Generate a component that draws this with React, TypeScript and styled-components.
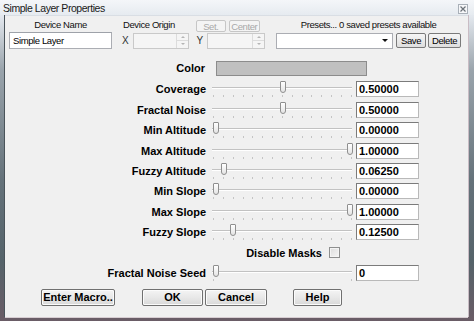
import React from 'react';
import styled, { createGlobalStyle } from 'styled-components';

const GlobalStyle = createGlobalStyle`
  html, body {
    margin: 0;
    padding: 0;
    width: 474px;
    height: 321px;
    overflow: hidden;
  }
  * { box-sizing: border-box; }
`;

const Window = styled.div`
  width: 474px;
  height: 321px;
  display: flex;
  flex-direction: column;
  background: linear-gradient(180deg, #eef2f6 0px, #e3e8ee 16px, #9aa4ac 70px, #65727a 180px, #55636a 260px, #6a5c66 321px);
  font-family: "Liberation Sans", Arial, sans-serif;
  color: #000;
`;

const TitleBar = styled.div`
  height: 15px;
  flex: none;
  display: flex;
  align-items: center;
  padding: 0 6px 0 3px;
  background: linear-gradient(180deg, #f4f6f9, #e6ebf0);
`;

const Title = styled.div`
  font-size: 10.5px;
  letter-spacing: -0.45px;
  color: #1a1a1a;
  flex: 1;
  padding-top: 1px;
`;

const CloseBox = styled.div`
  width: 10px;
  height: 10px;
  margin-top: 3px;
  border: 1px solid #a9b0b8;
  background: #f6f7f9;
  display: flex;
  align-items: center;
  justify-content: center;
`;

const Client = styled.div`
  flex: 1;
  margin: 0 6px 4px 5px;
  background: #f0f0f0;
  border-top: 1px solid #d9dee4;
  box-shadow: -1px 0 0 #4a545a, 1px 0 0 #c9bcc4, 0 1px 0 #d7cdd2;
  display: flex;
  flex-direction: column;
`;

const TopRow = styled.div`
  display: flex;
  align-items: flex-start;
  padding-top: 1px;
`;

const Group = styled.div<{ $w: number; $ml: number }>`
  width: ${p => p.$w}px;
  margin-left: ${p => p.$ml}px;
  display: flex;
  flex-direction: column;
`;

const GroupHead = styled.div<{ $center?: boolean }>`
  height: 15px;
  display: flex;
  align-items: center;
  justify-content: ${p => (p.$center ? 'center' : 'flex-start')};
`;

const SmallLabel = styled.span<{ $pl?: number }>`
  font-size: 9.5px;
  letter-spacing: -0.4px;
  color: #111;
  padding-left: ${p => p.$pl ?? 0}px;
  white-space: nowrap;
`;

const FieldRow = styled.div`
  height: 17px;
  display: flex;
  align-items: center;
`;

const TextField = styled.div`
  width: 103px;
  height: 17px;
  border: 1px solid #abadb3;
  border-top-color: #9ea2a9;
  background: #fff;
  font-size: 9.5px;
  letter-spacing: -0.4px;
  padding: 2px 0 0 3px;
`;

const MiniButton = styled.div<{ $w: number; $ml: number; $disabled?: boolean }>`
  width: ${p => p.$w}px;
  margin-left: ${p => p.$ml}px;
  height: ${p => (p.$disabled ? 12 : 15)}px;
  margin-top: ${p => (p.$disabled ? 3 : 0)}px;
  border: 1px solid ${p => (p.$disabled ? '#c6c6c6' : '#7a7a7a')};
  border-radius: 2px;
  background: ${p => (p.$disabled ? '#f4f4f4' : 'linear-gradient(180deg, #f6f6f6, #dedede)')};
  color: ${p => (p.$disabled ? '#a8a8a8' : '#000')};
  font-size: 9.5px;
  letter-spacing: -0.4px;
  display: flex;
  align-items: center;
  justify-content: center;
`;

const AxisLabel = styled.span<{ $w: number }>`
  width: ${p => p.$w}px;
  font-size: 10px;
  color: #333;
  padding-left: 2px;
`;

const Spin = styled.div<{ $w: number }>`
  width: ${p => p.$w}px;
  height: 16px;
  border: 1px solid #c9c9c9;
  background: #f5f5f5;
  display: flex;
  justify-content: flex-end;
`;

const SpinArrows = styled.div`
  width: 12px;
  display: flex;
  flex-direction: column;
  border-left: 1px solid #dcdcdc;
`;

const SpinHalf = styled.div<{ $down?: boolean }>`
  flex: 1;
  display: flex;
  align-items: center;
  justify-content: center;
  border-top: ${p => (p.$down ? '1px solid #dcdcdc' : 'none')};
  &::after {
    content: '';
    border-left: 2px solid transparent;
    border-right: 2px solid transparent;
    ${p => (p.$down ? 'border-top: 2px solid #b5b5b5;' : 'border-bottom: 2px solid #b5b5b5;')}
  }
`;

const Combo = styled.div`
  width: 117px;
  height: 16px;
  border: 1px solid #abadb3;
  background: #fff;
  display: flex;
  align-items: center;
  justify-content: flex-end;
  padding-right: 4px;
  &::after {
    content: '';
    border-left: 3px solid transparent;
    border-right: 3px solid transparent;
    border-top: 3px solid #111;
  }
`;

const FormGrid = styled.div`
  display: grid;
  grid-template-columns: 201px 142px 63px;
  column-gap: 4px;
  row-gap: 4.4px;
  grid-auto-rows: 16px;
  margin-top: 12px;
`;

const FieldLabel = styled.div`
  font-size: 11px;
  font-weight: bold;
  text-align: right;
  line-height: 16px;
  white-space: nowrap;
`;

const ColorLabel = styled(FieldLabel)`
  line-height: 15px;
  padding-right: 1px;
`;

const Swatch = styled.div`
  grid-column: 2 / span 2;
  width: 151px;
  height: 15px;
  margin-left: 6px;
  background: #c0c0c0;
  border: 1px solid #8c8c8c;
  margin-bottom: 2.6px;
`;

const SliderBox = styled.div`
  position: relative;
  height: 16px;
  padding: 6px 0 0 2px;
`;

const Track = styled.div`
  height: 2px;
  border-top: 1px solid #c2c2c2;
  border-bottom: 1px solid #ffffff;
`;

const Ticks = styled.div`
  display: flex;
  justify-content: space-between;
  margin-top: 6px;
  padding-left: 1px;
`;

const Tick = styled.span`
  width: 1px;
  height: 2px;
  background: #c4c4c4;
`;

const Thumb = styled.div`
  position: absolute;
  top: 0;
  width: 6px;
  height: 12px;
  border: 1px solid #8f8f8f;
  border-radius: 1px 1px 3px 3px;
  background: linear-gradient(180deg, #ffffff, #e4e4e4);
`;

const ValueBox = styled.div`
  height: 16px;
  border: 1px solid #7b7b7b;
  border-right-color: #b9b9b9;
  border-bottom-color: #b9b9b9;
  background: #fff;
  font-size: 11px;
  font-weight: bold;
  line-height: 14px;
  padding-left: 2px;
`;

const CheckRow = styled.div`
  grid-column: 1 / span 2;
  display: flex;
  justify-content: flex-end;
  align-items: center;
  padding-right: 12px;
  gap: 7px;
`;

const CheckBox = styled.div`
  width: 11px;
  height: 11px;
  border: 1px solid #8e8f8f;
  background: linear-gradient(135deg, #dcdcdc, #f6f6f6);
  box-shadow: inset 0 0 0 1px #f4f4f4;
`;

const ButtonBar = styled.div`
  display: flex;
  margin-top: 8px;
  padding-left: 36px;
`;

const DialogButton = styled.div<{ $w: number; $ml: number }>`
  width: ${p => p.$w}px;
  margin-left: ${p => p.$ml}px;
  height: 17px;
  border: 1px solid #707070;
  border-radius: 2px;
  background: linear-gradient(180deg, #f4f4f4 0%, #e8e8e8 50%, #d8d8d8 100%);
  box-shadow: inset 0 0 0 1px #fbfbfb;
  font-size: 11px;
  font-weight: bold;
  display: flex;
  align-items: center;
  justify-content: center;
`;

type SliderRow = { label: string; value: number; text: string };

const rows: SliderRow[] = [
  { label: 'Coverage', value: 0.5, text: '0.50000' },
  { label: 'Fractal Noise', value: 0.5, text: '0.50000' },
  { label: 'Min Altitude', value: 0, text: '0.00000' },
  { label: 'Max Altitude', value: 1, text: '1.00000' },
  { label: 'Fuzzy Altitude', value: 0.0625, text: '0.06250' },
  { label: 'Min Slope', value: 0, text: '0.00000' },
  { label: 'Max Slope', value: 1, text: '1.00000' },
  { label: 'Fuzzy Slope', value: 0.125, text: '0.12500' },
];

const Slider: React.FC<{ value: number; ticks?: number }> = ({ value, ticks = 15 }) => (
  <SliderBox>
    <Track />
    <Ticks>
      {Array.from({ length: ticks }).map((_, i) => (
        <Tick key={i} />
      ))}
    </Ticks>
    <Thumb style={{ left: 3 + value * 134 }} />
  </SliderBox>
);

const SpinField: React.FC<{ w: number }> = ({ w }) => (
  <Spin $w={w}>
    <SpinArrows>
      <SpinHalf />
      <SpinHalf $down />
    </SpinArrows>
  </Spin>
);

const App: React.FC = () => {
  return (
    <Window>
      <GlobalStyle />
      <TitleBar>
        <Title>Simple Layer Properties</Title>
        <CloseBox>
          <svg width="6" height="6" viewBox="0 0 6 6">
            <path d="M0.5 0.5 L5.5 5.5 M5.5 0.5 L0.5 5.5" stroke="#6c737a" strokeWidth="1.2" />
          </svg>
        </CloseBox>
      </TitleBar>

      <Client>
        <TopRow>
          <Group $w={103} $ml={4}>
            <GroupHead $center>
              <SmallLabel>Device Name</SmallLabel>
            </GroupHead>
            <FieldRow>
              <TextField>Simple Layer</TextField>
            </FieldRow>
          </Group>

          <Group $w={145} $ml={8}>
            <GroupHead>
              <SmallLabel $pl={3}>Device Origin</SmallLabel>
              <MiniButton $w={30} $ml={21} $disabled>Set.</MiniButton>
              <MiniButton $w={31} $ml={3} $disabled>Center</MiniButton>
            </GroupHead>
            <FieldRow>
              <AxisLabel $w={13}>X</AxisLabel>
              <SpinField w={56} />
              <AxisLabel $w={18}>&nbsp;&nbsp;Y</AxisLabel>
              <SpinField w={58} />
            </FieldRow>
          </Group>

          <Group $w={185} $ml={11}>
            <GroupHead $center>
              <SmallLabel>Presets... 0 saved presets available</SmallLabel>
            </GroupHead>
            <FieldRow>
              <Combo />
              <MiniButton $w={30} $ml={3}>Save</MiniButton>
              <MiniButton $w={33} $ml={2}>Delete</MiniButton>
            </FieldRow>
          </Group>
        </TopRow>

        <FormGrid>
          <ColorLabel>Color</ColorLabel>
          <Swatch />

          {rows.map(r => (
            <React.Fragment key={r.label}>
              <FieldLabel>{r.label}</FieldLabel>
              <Slider value={r.value} />
              <ValueBox>{r.text}</ValueBox>
            </React.Fragment>
          ))}

          <CheckRow>
            <FieldLabel>Disable Masks</FieldLabel>
            <CheckBox />
          </CheckRow>
          <div />

          <FieldLabel>Fractal Noise Seed</FieldLabel>
          <Slider value={0} ticks={2} />
          <ValueBox>0</ValueBox>
        </FormGrid>

        <ButtonBar>
          <DialogButton $w={74} $ml={0}>Enter Macro..</DialogButton>
          <DialogButton $w={61} $ml={27}>OK</DialogButton>
          <DialogButton $w={62} $ml={2}>Cancel</DialogButton>
          <DialogButton $w={49} $ml={26}>Help</DialogButton>
        </ButtonBar>
      </Client>
    </Window>
  );
};

export default App;
